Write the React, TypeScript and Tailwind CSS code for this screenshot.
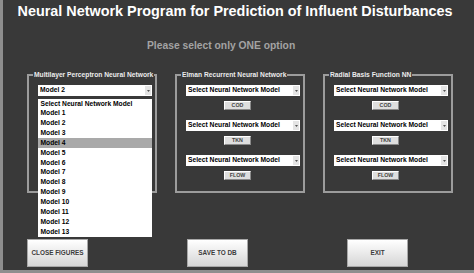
const models = [
  'Select Neural Network Model',
  'Model 1',
  'Model 2',
  'Model 3',
  'Model 4',
  'Model 5',
  'Model 6',
  'Model 7',
  'Model 8',
  'Model 9',
  'Model 10',
  'Model 11',
  'Model 12',
  'Model 13',
];

function Arrow() {
  return (
    <span className="mr-[1px] flex h-[9px] w-[6px] items-center justify-center bg-[#e4e4e4]">
      <svg width="3" height="2" viewBox="0 0 3 2">
        <path d="M0 0h3L1.5 2z" fill="#555" />
      </svg>
    </span>
  );
}

function Select({ label }: { label: string }) {
  return (
    <div className="flex h-[11px] w-[114px] items-center bg-white pl-[2px]">
      <span className="flex-1 text-[6.7px] font-bold leading-none text-black">{label}</span>
      <Arrow />
    </div>
  );
}

function SmallButton({ label }: { label: string }) {
  return (
    <div className="ml-[38px] flex h-[8.5px] w-[27px] items-center justify-center border-t border-l border-t-white border-l-white border-b border-r border-b-[#8a8a8a] border-r-[#8a8a8a] bg-[#dedede] text-[5.3px] font-bold leading-none text-[#444]">
      {label}
    </div>
  );
}

function Panel({ title, children }: { title: string; children: React.ReactNode }) {
  return (
    <fieldset className="relative h-[121px] w-[130px] border-2 border-[#9c9c9c] p-0">
      <legend className="ml-[4px] px-[1px] text-[6.7px] font-bold leading-none text-[#ececec]">
        {title}
      </legend>
      <div className="pl-[9px] pt-[6.6px]">{children}</div>
    </fieldset>
  );
}

function ModelGroup() {
  return (
    <div className="flex flex-col">
      <Select label="Select Neural Network Model" />
      <div className="mt-[5px] mb-[10.5px]">
        <SmallButton label="COD" />
      </div>
      <Select label="Select Neural Network Model" />
      <div className="mt-[5px] mb-[10.5px]">
        <SmallButton label="TKN" />
      </div>
      <Select label="Select Neural Network Model" />
      <div className="mt-[5px]">
        <SmallButton label="FLOW" />
      </div>
    </div>
  );
}

function BigButton({ label }: { label: string }) {
  return (
    <button className="flex h-[28px] w-[61px] items-center justify-center border border-[#a8a8a8] bg-gradient-to-b from-white to-[#d6d6d6] text-[6.4px] font-bold leading-none text-[#3c3c3c]">
      {label}
    </button>
  );
}

export default function App() {
  return (
    <div className="flex h-[273px] w-[474px] flex-col border-b-[3px] border-l-[3px] border-b-[#8e8e8e] border-l-[#8e8e8e] bg-[#393939] font-['Liberation_Sans',Arial,sans-serif]">
      <h1 className="pr-[7px] pt-[4px] text-center text-[14.4px] font-bold leading-none text-white">
        Neural Network Program for Prediction of Influent Disturbances
      </h1>
      <p className="ml-[144px] mt-[22.6px] text-[10.3px] font-bold leading-none text-[#a3a3a3]">
        Please select only ONE option
      </p>

      <div className="ml-[24px] mt-[20.5px] flex gap-[18px]">
        <Panel title="Multilayer Perceptron Neural Network">
          <Select label="Model 2" />
          <div className="absolute left-[9px] top-[20.5px] z-10 w-[114px] bg-white">
            {models.map((m) => (
              <div
                key={m}
                className={`flex h-[9.85px] items-center pl-[2.5px] text-[6.7px] font-bold leading-none text-black ${
                  m === 'Model 4' ? 'bg-[#a9a9a9]' : ''
                }`}
              >
                {m}
              </div>
            ))}
          </div>
        </Panel>
        <Panel title="Elman Recurrent Neural Network">
          <ModelGroup />
        </Panel>
        <Panel title="Radial Basis Function NN">
          <ModelGroup />
        </Panel>
      </div>

      <div className="mb-[3px] ml-[24px] mt-auto flex gap-[99px]">
        <BigButton label="CLOSE FIGURES" />
        <BigButton label="SAVE TO DB" />
        <BigButton label="EXIT" />
      </div>
    </div>
  );
}
